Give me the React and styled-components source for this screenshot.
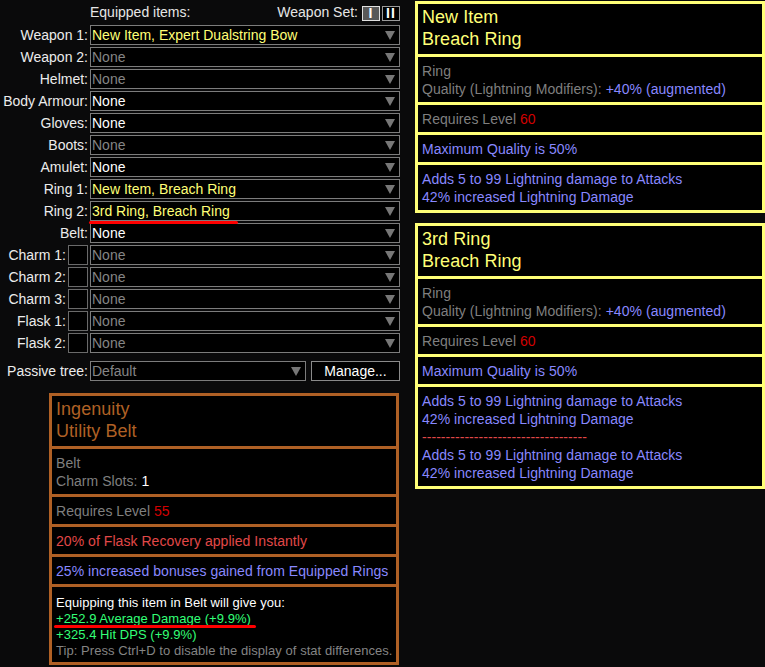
import styled, { createGlobalStyle } from "styled-components";

/* --- COLOURS --- */
const YELLOW = "#ffff77";
const UNIQUE = "#af6025";
const MAGIC = "#8888ff";
const GRAY = "#7f7f7f";
const RED = "#d20000";
const GREEN = "#33ff77";
const CRAFTED = "#e04848";

/* --- STYLES --- */
const GlobalStyle = createGlobalStyle`
  html, body {
    margin: 0;
    background: #0a0a0b;
    font-family: "Liberation Sans", Arial, sans-serif;
  }
`;

const Page = styled.div`
  width: 765px;
  height: 667px;
  overflow: hidden;
  display: flex;
  align-items: flex-start;
`;

const Left = styled.div`
  width: 400px;
  display: flex;
  flex-direction: column;
`;

const Slots = styled.div`
  display: flex;
  flex-direction: column;
  gap: 2px;
`;

const Header = styled.div`
  height: 23px;
  display: flex;
  align-items: center;
  padding-left: 90px;
  color: #e6e6e6;
  font-size: 14px;
`;

const Spacer = styled.div`
  flex: 1;
`;

const SetLabel = styled.span`
  margin-right: 4px;
  margin-top: 1px;
`;

const SetButton = styled.div`
  width: 18px;
  height: 15px;
  box-sizing: border-box;
  margin-left: ${(p) => (p.$first ? "0" : "2px")};
  margin-top: 3px;
  display: flex;
  align-items: center;
  justify-content: center;
  background: ${(p) => (p.$active ? "#595959" : "#000")};
  border: 1px solid ${(p) => (p.$active ? "#e0e0e0" : "#9a9a9a")};
  color: #fff;
  font-weight: bold;
  font-size: 14px;
  letter-spacing: 1px;
  line-height: 13px;
`;

const Row = styled.div`
  height: 20px;
  display: flex;
  align-items: stretch;
  gap: 2px;
  margin-top: ${(p) => p.$spaced || 0}px;
`;

const Label = styled.div`
  width: ${(p) => p.$width || 88}px;
  flex-shrink: 0;
  text-align: right;
  color: #ececec;
  font-size: 14px;
  line-height: 20px;
  white-space: nowrap;
`;

const Square = styled.div`
  width: 20px;
  flex-shrink: 0;
  box-sizing: border-box;
  border: 1px solid #6a6a6a;
  background: #000;
`;

const Select = styled.div`
  flex: ${(p) => (p.$width ? "none" : 1)};
  width: ${(p) => (p.$width ? `${p.$width}px` : "auto")};
  box-sizing: border-box;
  border: 1px solid #7c7c7c;
  background: #000;
  display: flex;
  align-items: center;
  padding: 0 4px 0 1px;
  font-size: 14px;
  line-height: 18px;
  color: ${(p) =>
    p.$tone === "item" ? YELLOW : p.$tone === "on" ? "#fff" : "#858585"};
`;

const SelectText = styled.span`
  flex: 1;
  white-space: nowrap;
  overflow: visible;
`;

const Marked = styled.span`
  position: relative;

  &::after {
    content: "";
    position: absolute;
    left: ${(p) => p.$left || -2}px;
    right: ${(p) => p.$right || 0}px;
    top: ${(p) => p.$top || 17}px;
    height: 3px;
    border-radius: 2px;
    background: #ff0000;
  }
`;

const Button = styled.div`
  width: 90px;
  box-sizing: border-box;
  border: 1px solid #8a8a8a;
  background: #000;
  color: #fff;
  font-size: 14px;
  line-height: 18px;
  text-align: center;
  margin-left: 3px;
`;

const Tip = styled.div`
  width: 350px;
  box-sizing: border-box;
  background: #000;
  border: 3px solid ${(p) => p.$color};
  margin: ${(p) => p.$margin || 0};
  letter-spacing: 0.05px;
`;

const Section = styled.div`
  border-top: ${(p) => (p.$first ? "none" : `3px solid ${p.$line}`)};
  padding: ${(p) =>
    p.$kind === "title"
      ? "2px 4px 4px"
      : p.$kind === "compare"
      ? "8px 4px 3px"
      : "5px 4px 4px"};
  font-size: ${(p) =>
    p.$kind === "title" ? 18 : p.$kind === "compare" ? 13 : 14}px;
  line-height: ${(p) =>
    p.$kind === "title" ? 22 : p.$kind === "compare" ? 16 : 18}px;
  color: ${(p) => p.$color || GRAY};
  white-space: nowrap;
`;

const Line = styled.div`
  color: ${(p) => p.$color || "inherit"};
`;

const Hl = styled.span`
  color: ${(p) => p.$color};
`;

const Right = styled.div`
  width: 350px;
  margin-left: 15px;
  padding-top: 1px;
  display: flex;
  flex-direction: column;
  gap: 10px;
`;

/* --- DATA --- */
const slots = [
  { label: "Weapon 1", value: "New Item, Expert Dualstring Bow", tone: "item" },
  { label: "Weapon 2", value: "None" },
  { label: "Helmet", value: "None" },
  { label: "Body Armour", value: "None", tone: "on" },
  { label: "Gloves", value: "None", tone: "on" },
  { label: "Boots", value: "None" },
  { label: "Amulet", value: "None", tone: "on" },
  { label: "Ring 1", value: "New Item, Breach Ring", tone: "item" },
  { label: "Ring 2", value: "3rd Ring, Breach Ring", tone: "item", mark: true },
  { label: "Belt", value: "None", tone: "on" },
  { label: "Charm 1", value: "None", square: true },
  { label: "Charm 2", value: "None", square: true },
  { label: "Charm 3", value: "None", square: true },
  { label: "Flask 1", value: "None", square: true },
  { label: "Flask 2", value: "None", square: true },
];

/* --- COMPONENTS --- */
function Arrow() {
  return (
    <svg width="10" height="9" viewBox="0 0 10 9">
      <polygon points="0,0 10,0 5,9" fill="#777" />
    </svg>
  );
}

function Dropdown({ value, tone, mark, width }) {
  return (
    <Select $tone={tone} $width={width}>
      <SelectText>
        {mark ? (
          <Marked $left={-3} $right={-8} $top={18}>
            {value}
          </Marked>
        ) : (
          value
        )}
      </SelectText>
      <Arrow />
    </Select>
  );
}

function RingTip({ name, doubled }) {
  const mods = (
    <>
      <Line>Adds 5 to 99 Lightning damage to Attacks</Line>
      <Line>42% increased Lightning Damage</Line>
    </>
  );
  return (
    <Tip $color={YELLOW}>
      <Section $first $kind="title" $color={YELLOW}>
        <Line>{name}</Line>
        <Line>Breach Ring</Line>
      </Section>
      <Section $line={YELLOW}>
        <Line>Ring</Line>
        <Line>
          Quality (Lightning Modifiers): <Hl $color={MAGIC}>+40% (augmented)</Hl>
        </Line>
      </Section>
      <Section $line={YELLOW}>
        Requires Level <Hl $color={RED}>60</Hl>
      </Section>
      <Section $line={YELLOW} $color={MAGIC}>
        Maximum Quality is 50%
      </Section>
      <Section $line={YELLOW} $color={MAGIC}>
        {mods}
        {doubled && (
          <>
            <Line $color={CRAFTED}>{"-".repeat(35)}</Line>
            {mods}
          </>
        )}
      </Section>
    </Tip>
  );
}

export default function App() {
  return (
    <>
      <GlobalStyle />
      <Page>
        <Left>
          <Slots>
            <Header>
              Equipped items:
              <Spacer />
              <SetLabel>Weapon Set:</SetLabel>
              <SetButton $first $active>I</SetButton>
              <SetButton>II</SetButton>
            </Header>

            {slots.map((s) => (
              <Row key={s.label}>
                <Label $width={s.square ? 66 : 88}>{s.label}:</Label>
                {s.square && <Square />}
                <Dropdown value={s.value} tone={s.tone} mark={s.mark} />
              </Row>
            ))}

            <Row $spaced={6}>
              <Label>Passive tree:</Label>
              <Dropdown value="Default" width={216} />
              <Button>Manage...</Button>
            </Row>
          </Slots>

          <Tip $color={UNIQUE} $margin="12px 0 0 49px">
            <Section $first $kind="title" $color={UNIQUE}>
              <Line>Ingenuity</Line>
              <Line>Utility Belt</Line>
            </Section>
            <Section $line={UNIQUE}>
              <Line>Belt</Line>
              <Line>
                Charm Slots: <Hl $color="#fff">1</Hl>
              </Line>
            </Section>
            <Section $line={UNIQUE}>
              Requires Level <Hl $color={RED}>55</Hl>
            </Section>
            <Section $line={UNIQUE} $color={CRAFTED}>
              20% of Flask Recovery applied Instantly
            </Section>
            <Section $line={UNIQUE} $color={MAGIC}>
              25% increased bonuses gained from Equipped Rings
            </Section>
            <Section $line={UNIQUE} $kind="compare">
              <Line $color="#fff">Equipping this item in Belt will give you:</Line>
              <Line $color={GREEN}>
                <Marked $left={0} $right={-5} $top={14}>
                  +252.9 Average Damage (+9.9%)
                </Marked>
              </Line>
              <Line $color={GREEN}>+325.4 Hit DPS (+9.9%)</Line>
              <Line $color="#848484">
                Tip: Press Ctrl+D to disable the display of stat differences.
              </Line>
            </Section>
          </Tip>
        </Left>

        <Right>
          <RingTip name="New Item" />
          <RingTip name="3rd Ring" doubled />
        </Right>
      </Page>
    </>
  );
}
